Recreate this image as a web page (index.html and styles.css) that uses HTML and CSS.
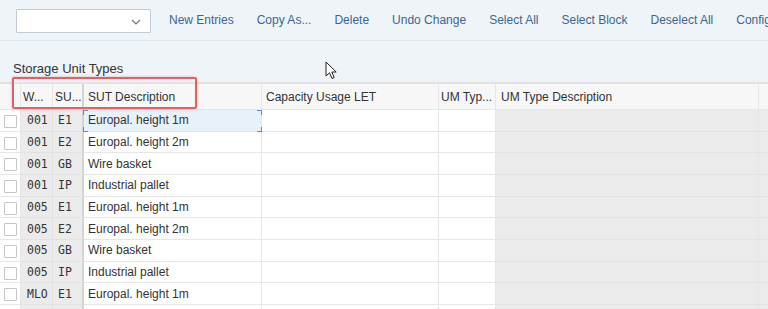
FILE: index.html
```html
<!DOCTYPE html>
<html>
<head>
    <title>Storage Unit Types</title>
    <meta charset="utf-8" />
    <link rel="stylesheet" href="styles.css">
</head>
<body>
    <div class="page">
        <div class="toolbar">
            <div class="dropdown">
                <svg class="chevron" width="10" height="6" viewBox="0 0 10 6"><path d="M1 1 L5 5 L9 1" fill="none" stroke="#6a7b8c" stroke-width="1.2"/></svg>
            </div>
            <div class="actions">
                <span class="action">New Entries</span>
                <span class="action">Copy As...</span>
                <span class="action">Delete</span>
                <span class="action">Undo Change</span>
                <span class="action">Select All</span>
                <span class="action">Select Block</span>
                <span class="action">Deselect All</span>
                <span class="action">Configuration</span>
            </div>
        </div>

        <div class="titlebar">
            <h2 class="title">Storage Unit Types</h2>
        </div>

        <div class="grid">
            <table>
                <colgroup>
                    <col class="c-sel">
                    <col class="c-wh">
                    <col class="c-sut">
                    <col class="c-desc">
                    <col class="c-cap">
                    <col class="c-um">
                    <col class="c-umdesc">
                    <col class="c-rest">
                </colgroup>
                <thead>
                    <tr>
                        <th class="sel"></th>
                        <th class="key">W...</th>
                        <th class="key keylast">SU...</th>
                        <th>SUT Description</th>
                        <th>Capacity Usage LET</th>
                        <th class="narrow">UM Typ...</th>
                        <th class="wide">UM Type Description</th>
                        <th></th>
                    </tr>
                </thead>
                <tbody id="rows">
                    <tr>
                        <td class="sel"><span class="check"></span></td>
                        <td class="key">001</td>
                        <td class="key keylast">E1</td>
                        <td class="current">Europal. height 1m<span class="corner tl"></span><span class="corner tr"></span><span class="corner bl"></span><span class="corner br"></span></td>
                        <td></td><td></td><td class="ro"></td><td class="ro"></td>
                    </tr>
                    <tr>
                        <td class="sel"><span class="check"></span></td>
                        <td class="key">001</td>
                        <td class="key keylast">E2</td>
                        <td>Europal. height 2m</td>
                        <td></td><td></td><td class="ro"></td><td class="ro"></td>
                    </tr>
                    <tr>
                        <td class="sel"><span class="check"></span></td>
                        <td class="key">001</td>
                        <td class="key keylast">GB</td>
                        <td>Wire basket</td>
                        <td></td><td></td><td class="ro"></td><td class="ro"></td>
                    </tr>
                    <tr>
                        <td class="sel"><span class="check"></span></td>
                        <td class="key">001</td>
                        <td class="key keylast">IP</td>
                        <td>Industrial pallet</td>
                        <td></td><td></td><td class="ro"></td><td class="ro"></td>
                    </tr>
                    <tr>
                        <td class="sel"><span class="check"></span></td>
                        <td class="key">005</td>
                        <td class="key keylast">E1</td>
                        <td>Europal. height 1m</td>
                        <td></td><td></td><td class="ro"></td><td class="ro"></td>
                    </tr>
                    <tr>
                        <td class="sel"><span class="check"></span></td>
                        <td class="key">005</td>
                        <td class="key keylast">E2</td>
                        <td>Europal. height 2m</td>
                        <td></td><td></td><td class="ro"></td><td class="ro"></td>
                    </tr>
                    <tr>
                        <td class="sel"><span class="check"></span></td>
                        <td class="key">005</td>
                        <td class="key keylast">GB</td>
                        <td>Wire basket</td>
                        <td></td><td></td><td class="ro"></td><td class="ro"></td>
                    </tr>
                    <tr>
                        <td class="sel"><span class="check"></span></td>
                        <td class="key">005</td>
                        <td class="key keylast">IP</td>
                        <td>Industrial pallet</td>
                        <td></td><td></td><td class="ro"></td><td class="ro"></td>
                    </tr>
                    <tr>
                        <td class="sel"><span class="check"></span></td>
                        <td class="key">MLO</td>
                        <td class="key keylast">E1</td>
                        <td>Europal. height 1m</td>
                        <td></td><td></td><td class="ro"></td><td class="ro"></td>
                    </tr>
                    <tr>
                        <td class="sel"><span class="check"></span></td>
                        <td class="key"></td>
                        <td class="key keylast"></td>
                        <td></td>
                        <td></td><td></td><td class="ro"></td><td class="ro"></td>
                    </tr>
                </tbody>
            </table>
        </div>

        <!-- annotation box round the first header cells -->
        <div class="highlight"></div>

        <svg class="pointer" width="13" height="19" viewBox="0 0 13 19">
            <path d="M1 1 L1 15 L4.5 11.8 L7 17.5 L9.2 16.5 L6.8 11 L11.2 11 Z" fill="#fff" stroke="#222" stroke-width="1" stroke-linejoin="round"/>
        </svg>
    </div>
</body>
</html>
```

FILE: styles.css
```css
html, body {
    margin: 0;
    padding: 0;
}

body {
    background-color: #eff4f9;
    font-family: "Liberation Sans", Arial, sans-serif;
    color: #333;
    height: 100vh;
    overflow: hidden;
}

.page {
    position: relative;
    width: 768px;
    height: 309px;
    overflow: hidden;
}

.toolbar {
    display: flex;
    align-items: center;
    height: 40px;
    padding-left: 16px;
    border-bottom: 1px solid #dfe7ef;
}

.dropdown {
    position: relative;
    flex-shrink: 0;
    box-sizing: border-box;
    width: 135px;
    height: 24px;
    margin-top: 1px;
    background-color: #fff;
    border: 1px solid #c3ccd5;
    border-radius: 1px;
}

.chevron {
    position: absolute;
    right: 9px;
    top: 9px;
}

.actions {
    display: flex;
    flex-shrink: 0;
    gap: 23px;
    margin-left: 18px;
    white-space: nowrap;
}

.action {
    font-size: 12px;
    color: #3b6690;
}

.titlebar {
    display: flex;
    align-items: flex-end;
    height: 41px;
    padding-left: 13px;
}

.title {
    margin: 0 0 6px 0;
    font-size: 13px;
    font-weight: normal;
    color: #333;
}

.grid {
    border-top: 2px solid #e0e2e4;
    background-color: #fff;
}

table {
    table-layout: fixed;
    border-collapse: separate;
    border-spacing: 0;
    width: 820px;
}

.c-sel { width: 21px; }
.c-wh { width: 32px; }
.c-sut { width: 31px; }
.c-desc { width: 178px; }
.c-cap { width: 177px; }
.c-um { width: 57px; }
.c-umdesc { width: 263px; }
.c-rest { width: 61px; }

th, td {
    border-right: 1px solid #e6e6e6;
    border-bottom: 1px solid #e6e6e6;
    padding: 0 4px;
    font-size: 12px;
    text-align: left;
    white-space: nowrap;
    overflow: hidden;
}

th {
    height: 25px;
    background-color: #f7f7f7;
    font-weight: normal;
    color: #333;
}

th.key {
    padding: 0 2px;
}

th.narrow {
    padding: 0 2px;
}

th.wide {
    padding: 0 5px;
}

tbody tr {
    height: 21.67px;
}

td {
    position: relative;
    padding: 0 4px;
    color: #333;
}

.sel {
    padding: 0;
    text-align: center;
}

td.sel {
    background-color: #fff;
}

.check {
    display: inline-block;
    box-sizing: border-box;
    width: 13px;
    height: 13px;
    margin-top: 2px;
    vertical-align: middle;
    background-color: #fff;
    border: 1px solid #c6c6c6;
    border-radius: 1px;
}

td.key {
    padding: 0 5px;
    background-color: #ebebeb;
    border-right-color: #e0e0e0;
    border-bottom-color: #e2e2e2;
    font-family: "DejaVu Sans Mono", "Liberation Mono", monospace;
    font-size: 11.5px;
    color: #333;
}

td:nth-child(2) {
    padding-left: 6px;
}

.keylast,
td.keylast {
    border-right: 2px solid #d4d4d4;
}

td.ro {
    background-color: #ebebeb;
    border-bottom-color: #e2e2e2;
}

td.current {
    background-color: #e6f1fa;
    overflow: visible;
}

.corner {
    position: absolute;
    width: 4px;
    height: 4px;
    border-color: #5d8dbd;
    border-style: solid;
    border-width: 0;
}

.corner.tl { left: -1px; top: 0; border-left-width: 1px; border-top-width: 1px; }
.corner.tr { right: -1px; top: 0; border-right-width: 1px; border-top-width: 1px; }
.corner.bl { left: -1px; bottom: -1px; border-left-width: 1px; border-bottom-width: 1px; }
.corner.br { right: -1px; bottom: -1px; border-right-width: 1px; border-bottom-width: 1px; }

.highlight {
    position: absolute;
    left: 12px;
    top: 77px;
    width: 181px;
    height: 28px;
    border: 2px solid #e35f62;
    border-radius: 2px;
    box-shadow: 0 0 3px rgba(190, 60, 60, 0.35);
}

.pointer {
    position: absolute;
    left: 325px;
    top: 61px;
}
```
